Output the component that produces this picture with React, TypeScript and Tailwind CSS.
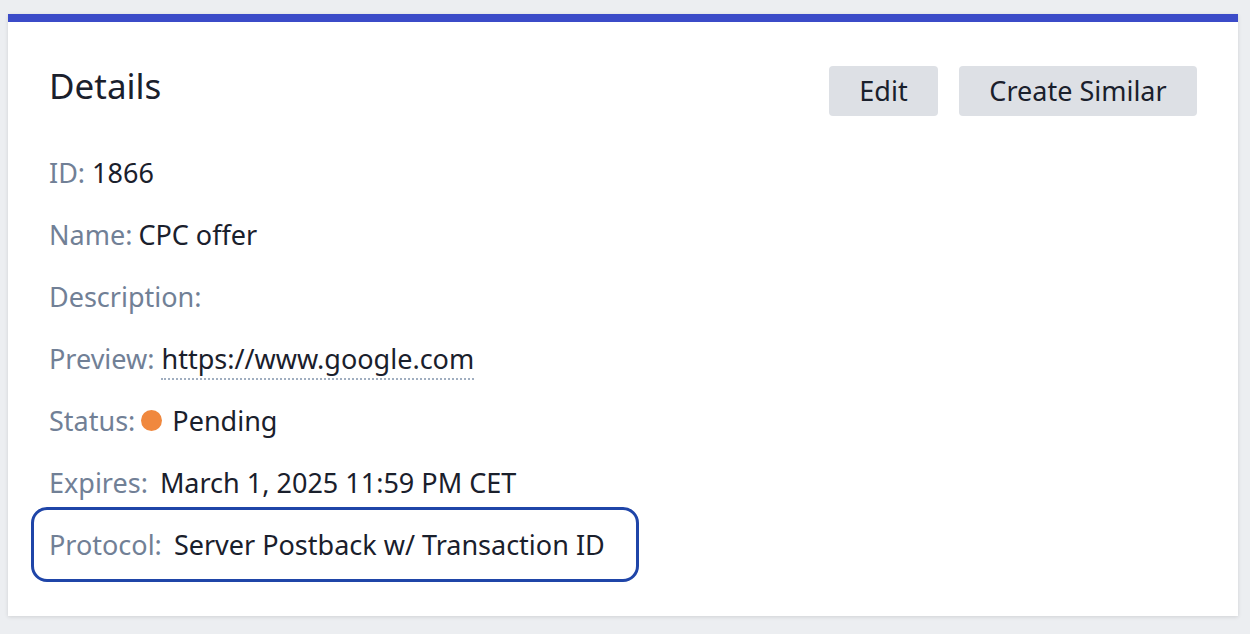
import React from 'react';

const font = { fontFamily: '"Noto Sans", "Open Sans", sans-serif' };

const Row = ({ label, children }: { label: string; children?: React.ReactNode }) => (
  <div className="flex h-[62px] items-center text-[27px] leading-none">
    <span className="text-[#718096]">{label}</span>
    {children}
  </div>
);

const App = () => {
  return (
    <div className="min-h-[634px] bg-[#eceef1] pt-[14px]" style={font}>
      <div className="mx-2 h-[602px] w-[1230px] border-t-8 border-[#3b4bc8] bg-white px-[41px] shadow-[0_1px_4px_rgba(0,0,0,0.12)]">
        <div className="mt-[44px] flex h-[50px] items-start justify-between">
          <h2 className="text-[35px] leading-[40px] text-[#1a202c]">Details</h2>
          <div className="flex gap-[21px]">
            <button className="h-[50px] w-[109px] rounded bg-[#dde0e5] text-[27px] text-[#1a202c]">Edit</button>
            <button className="h-[50px] w-[238px] rounded bg-[#dde0e5] text-[27px] text-[#1a202c]">Create Similar</button>
          </div>
        </div>

        <div className="mt-[25px] flex flex-col">
          <Row label="ID:">
            <span className="ml-[7px] text-[#1a202c]">1866</span>
          </Row>
          <Row label="Name:">
            <span className="ml-[6px] text-[#1a202c]">CPC offer</span>
          </Row>
          <Row label="Description:" />
          <Row label="Preview:">
            <span className="ml-[7px] border-b-2 border-dotted border-[#a0aec0] pb-[6px] pt-[8px] text-[#1a202c]">
              https://www.google.com
            </span>
          </Row>
          <Row label="Status:">
            <span className="ml-[6px] h-[21px] w-[21px] rounded-full bg-[#f0883e]" />
            <span className="ml-[10px] text-[#1a202c]">Pending</span>
          </Row>
          <Row label="Expires:">
            <span className="ml-[12px] text-[#1a202c]">March 1, 2025 11:59 PM CET</span>
          </Row>
          <div className="-ml-[18px] mt-[-6px] flex h-[75px] w-fit items-center rounded-2xl border-[3px] border-[#1f45a8] pl-[15px] pr-[31px] text-[27px] leading-none">
            <span className="text-[#718096]">Protocol:</span>
            <span className="ml-[12px] text-[#1a202c]">Server Postback w/ Transaction ID</span>
          </div>
        </div>
      </div>
    </div>
  );
};

export default App;
